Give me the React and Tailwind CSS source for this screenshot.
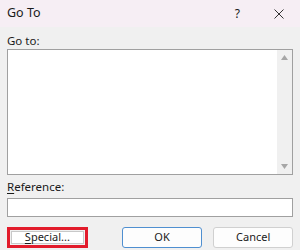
export default function App() {
  return (
    <div
      className="w-[300px] h-[250px] bg-[#f0f0f0] flex flex-col overflow-hidden text-[#1a1a1a]"
      style={{ fontFamily: '"Noto Sans", "Open Sans", sans-serif' }}
    >
      <div className="h-[27px] bg-[#f6eef4] flex items-center pl-[7px] shrink-0">
        <span className="text-[12.5px] leading-none">Go To</span>
        <span className="ml-auto text-[12px] leading-none mr-[34px]">?</span>
        <svg width="10" height="10" viewBox="0 0 10 10" className="mr-[16px]">
          <path d="M0.5 0.5 L9.5 9.5 M9.5 0.5 L0.5 9.5" stroke="#333" strokeWidth="1" />
        </svg>
      </div>

      <div className="flex flex-col px-[7px]">
        <label className="text-[11.5px] leading-[14px] mt-[7px] mb-[1px]">Go to:</label>
        <div className="h-[126px] bg-white border border-[#a0a0a0] flex">
          <div className="flex-1" />
          <div className="w-[15px] bg-[#f0f0f0] flex flex-col items-center justify-between py-[5px]">
            <svg width="7" height="5" viewBox="0 0 7 5">
              <path d="M3.5 0 L7 5 L0 5 Z" fill="#a6a6a6" />
            </svg>
            <svg width="7" height="5" viewBox="0 0 7 5">
              <path d="M0 0 L7 0 L3.5 5 Z" fill="#a6a6a6" />
            </svg>
          </div>
        </div>

        <label className="text-[11.5px] leading-[14px] mt-[5px] mb-[4px]">
          <span className="underline underline-offset-2">R</span>eference:
        </label>
        <div className="h-[19px] bg-white border border-[#a0a0a0]" />

        <div className="flex items-center mt-[10px]">
          <div className="w-[81px] h-[21px] border-[3px] border-[#e21b2b] p-[1px] flex">
            <div className="flex-1 bg-white border border-[#c8c8c8] flex items-center justify-center text-[11px]">
              <span>
                <span className="underline underline-offset-2">S</span>pecial...
              </span>
            </div>
          </div>
          <button className="ml-[34px] w-[81px] h-[21px] bg-[#fdfdfd] border border-[#4f8fd0] rounded-[3px] text-[11px] flex items-center justify-center">
            OK
          </button>
          <button className="ml-[11px] w-[80px] h-[21px] bg-[#fdfdfd] border border-[#d0d0d0] rounded-[3px] text-[11px] flex items-center justify-center">
            Cancel
          </button>
        </div>
      </div>
    </div>
  );
}
